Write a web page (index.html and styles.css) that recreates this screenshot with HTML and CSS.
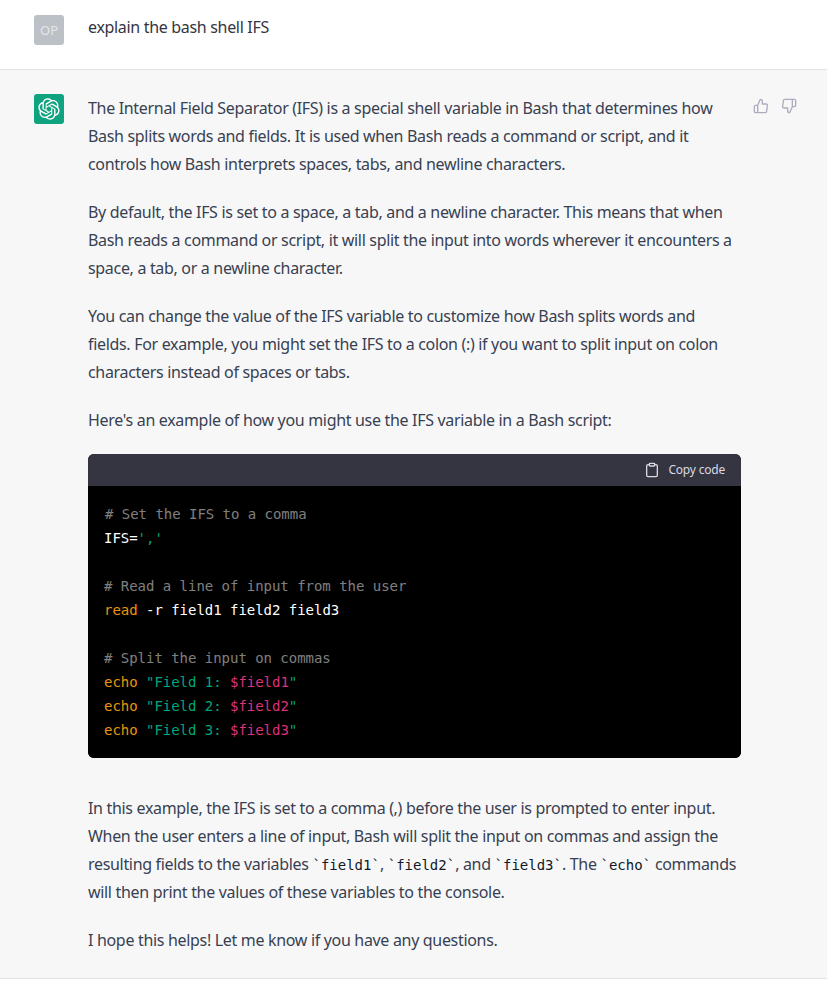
FILE: index.html
```html
<!DOCTYPE html>
<html lang="en">
<head>
<meta charset="utf-8">
<title>explain the bash shell IFS</title>
<link rel="stylesheet" href="styles.css">
</head>
<body>
<main class="thread">
  <section class="row row-user">
    <div class="avatar avatar-user">OP</div>
    <div class="message"><p class="user-text">explain the bash shell IFS</p></div>
  </section>
  <section class="row row-bot">
    <div class="avatar avatar-bot">
      <svg class="logo" viewBox="0 0 41 41" aria-hidden="true"><path fill="currentColor" d="M37.5324 16.8707C37.9808 15.5241 38.1363 14.0974 37.9886 12.6859C37.8409 11.2744 37.3934 9.91076 36.676 8.68622C35.6126 6.83404 33.9882 5.3676 32.0373 4.4985C30.0864 3.62941 27.9098 3.40259 25.8215 3.85078C24.8796 2.7893 23.7219 1.94125 22.4257 1.36341C21.1295 0.785575 19.7249 0.491269 18.3058 0.500197C16.1708 0.495044 14.0893 1.16803 12.3614 2.42214C10.6335 3.67624 9.34853 5.44666 8.6917 7.47815C7.30085 7.76286 5.98686 8.3414 4.8377 9.17505C3.68854 10.0087 2.73073 11.0782 2.02839 12.312C0.956464 14.1591 0.498905 16.2988 0.721698 18.4228C0.944492 20.5467 1.83612 22.5449 3.268 24.1293C2.81966 25.4759 2.66413 26.9026 2.81182 28.3141C2.95951 29.7256 3.40701 31.0892 4.12437 32.3138C5.18791 34.1659 6.8123 35.6322 8.76321 36.5013C10.7141 37.3704 12.8907 37.5973 14.9789 37.1492C15.9208 38.2107 17.0786 39.0587 18.3747 39.6366C19.6709 40.2144 21.0755 40.5087 22.4946 40.4998C24.6307 40.5054 26.7133 39.8321 28.4418 38.5772C30.1704 37.3223 31.4556 35.5506 32.1119 33.5179C33.5027 33.2332 34.8167 32.6547 35.9659 31.821C37.115 30.9874 38.0728 29.9178 38.7752 28.684C39.8458 26.8371 40.3023 24.6979 40.0789 22.5748C39.8556 20.4517 38.9639 18.4544 37.5324 16.8707ZM22.4978 37.8849C20.7443 37.8874 19.0459 37.2733 17.6994 36.1501C17.7601 36.117 17.8666 36.0586 17.936 36.0161L25.9004 31.4156C26.1003 31.3019 26.2663 31.137 26.3813 30.9378C26.4964 30.7386 26.5563 30.5124 26.5549 30.2825V19.0542L29.9213 20.998C29.9389 21.0068 29.9541 21.0198 29.9656 21.0359C29.977 21.052 29.9842 21.0707 29.9867 21.0902V30.3889C29.9842 32.375 29.1946 34.2791 27.7909 35.6841C26.3872 37.0892 24.4838 37.8806 22.4978 37.8849ZM6.39227 31.0064C5.51397 29.4888 5.19742 27.7107 5.49804 25.9832C5.55718 26.0187 5.66048 26.0818 5.73461 26.1244L13.699 30.7248C13.8975 30.8408 14.1233 30.902 14.3532 30.902C14.583 30.902 14.8088 30.8408 15.0073 30.7248L24.731 25.1103V28.9979C24.7321 29.0177 24.7283 29.0376 24.7199 29.0556C24.7115 29.0736 24.6988 29.0893 24.6829 29.1012L16.6317 33.7497C14.9096 34.7416 12.8643 35.0097 10.9447 34.4954C9.02506 33.9811 7.38785 32.7263 6.39227 31.0064ZM4.29707 13.6194C5.17156 12.0998 6.55279 10.9364 8.19885 10.3327C8.19885 10.4013 8.19491 10.5228 8.19491 10.6071V19.808C8.19351 20.0378 8.25334 20.2638 8.36823 20.4629C8.48312 20.6619 8.64893 20.8267 8.84863 20.9404L18.5723 26.5542L15.206 28.4979C15.1894 28.5089 15.1703 28.5155 15.1505 28.5173C15.1307 28.5191 15.1107 28.516 15.0924 28.5082L7.04046 23.8557C5.32135 22.8601 4.06716 21.2235 3.55289 19.3046C3.03862 17.3858 3.30624 15.3413 4.29707 13.6194ZM31.955 20.0556L22.2312 14.4411L25.5976 12.4981C25.6142 12.4872 25.6333 12.4805 25.6531 12.4787C25.6729 12.4769 25.6928 12.4801 25.7111 12.4879L33.7631 17.1364C34.9967 17.849 36.0017 18.8982 36.6606 20.1613C37.3194 21.4244 37.6047 22.849 37.4832 24.2684C37.3617 25.6878 36.8382 27.0432 35.9743 28.1759C35.1103 29.3086 33.9415 30.1717 32.6047 30.6641C32.6047 30.5947 32.6047 30.4733 32.6047 30.3889V21.188C32.6066 20.9586 32.5474 20.7328 32.4332 20.5338C32.319 20.3348 32.154 20.1698 31.955 20.0556ZM35.3055 15.0128C35.2464 14.9765 35.1431 14.9142 35.069 14.8717L27.1045 10.2712C26.906 10.1554 26.6803 10.0943 26.4504 10.0943C26.2206 10.0943 25.9948 10.1554 25.7963 10.2712L16.0726 15.8858V11.9982C16.0715 11.9783 16.0753 11.9585 16.0837 11.9405C16.0921 11.9225 16.1048 11.9068 16.1207 11.8949L24.1719 7.25025C25.4053 6.53903 26.8158 6.19376 28.2383 6.25482C29.6608 6.31589 31.0364 6.78077 32.2044 7.59508C33.3723 8.40939 34.2842 9.53945 34.8334 10.8531C35.3826 12.1667 35.5464 13.6095 35.3055 15.0128ZM14.2424 21.9419L10.8752 19.9981C10.8576 19.9893 10.8423 19.9763 10.8309 19.9602C10.8195 19.9441 10.8122 19.9254 10.8098 19.9058V10.6071C10.8107 9.18295 11.2173 7.78848 11.9819 6.58696C12.7466 5.38544 13.8377 4.42659 15.1275 3.82264C16.4173 3.21869 17.8524 2.99464 19.2649 3.1767C20.6775 3.35876 22.0089 3.93941 23.1034 4.85067C23.0427 4.88379 22.937 4.94215 22.8668 4.98473L14.9024 9.58517C14.7025 9.69878 14.5366 9.86356 14.4215 10.0626C14.3065 10.2616 14.2466 10.4877 14.2479 10.7175L14.2424 21.9419ZM16.071 17.9991L20.4018 15.4978L24.7325 17.9975V22.9985L20.4018 25.4983L16.071 22.9985V17.9991Z"/></svg>
    </div>
    <div class="message">
      <p>The Internal Field Separator (IFS) is a special shell variable in Bash that determines how<br>Bash splits words and fields. It is used when Bash reads a command or script, and it<br>controls how Bash interprets spaces, tabs, and newline characters.</p>
      <p>By default, the IFS is set to a space, a tab, and a newline character. This means that when<br>Bash reads a command or script, it will split the input into words wherever it encounters a<br>space, a tab, or a newline character.</p>
      <p>You can change the value of the IFS variable to customize how Bash splits words and<br>fields. For example, you might set the IFS to a colon (:) if you want to split input on colon<br>characters instead of spaces or tabs.</p>
      <p>Here's an example of how you might use the IFS variable in a Bash script:</p>
      <div class="code-block">
        <div class="code-head">
          <svg class="clip" viewBox="0 0 24 24" aria-hidden="true"><path d="M16 4h2a2 2 0 0 1 2 2v14a2 2 0 0 1-2 2H6a2 2 0 0 1-2-2V6a2 2 0 0 1 2-2h2"/><rect x="8" y="2" width="8" height="4" rx="1" ry="1"/></svg>
          <span class="copy-label">Copy code</span>
        </div>
        <pre class="code"><code><span class="c first"># Set the IFS to a comma</span>
IFS=<span class="s">','</span>

<span class="c"># Read a line of input from the user</span>
<span class="k">read</span> -r field1 field2 field3

<span class="c"># Split the input on commas</span>
<span class="k">echo</span> <span class="s">"Field 1: </span><span class="v">$field1</span><span class="s">"</span>
<span class="k">echo</span> <span class="s">"Field 2: </span><span class="v">$field2</span><span class="s">"</span>
<span class="k">echo</span> <span class="s">"Field 3: </span><span class="v">$field3</span><span class="s">"</span></code></pre>
      </div>
      <p>In this example, the IFS is set to a comma (,) before the user is prompted to enter input.<br>When the user enters a line of input, Bash will split the input on commas and assign the<br>resulting fields to the variables <code class="inline">`field1`</code>, <code class="inline">`field2`</code>, and <code class="inline">`field3`</code>. The <code class="inline">`echo`</code> commands<br>will then print the values of these variables to the console.</p>
      <p class="last">I hope this helps! Let me know if you have any questions.</p>
    </div>
    <div class="actions">
      <svg class="thumb" viewBox="0 0 24 24" aria-hidden="true"><path d="M14 9V5a3 3 0 0 0-3-3l-4 9v11h11.28a2 2 0 0 0 2-1.7l1.38-9a2 2 0 0 0-2-2.3zM7 22H4a2 2 0 0 1-2-2v-7a2 2 0 0 1 2-2h3"/></svg>
      <svg class="thumb" viewBox="0 0 24 24" aria-hidden="true"><path d="M10 15v4a3 3 0 0 0 3 3l4-9V2H5.72a2 2 0 0 0-2 1.7l-1.38 9a2 2 0 0 0 2 2.3zm7-13h2.67A2.31 2.31 0 0 1 22 4v7a2.31 2.31 0 0 1-2.33 2H17"/></svg>
    </div>
  </section>
</main>
</body>
</html>
```
FILE: styles.css
```css
* { box-sizing: border-box; }
html, body { margin: 0; padding: 0; background: #fff; }
body {
  font-family: "Noto Sans", "Open Sans", sans-serif;
  font-size: 16px;
  line-height: 28px;
  color: #374151;
  letter-spacing: -0.32px;
}
.thread { display: flex; flex-direction: column; }
.row {
  display: flex;
  align-items: flex-start;
  border-bottom: 1px solid #e2e2e4;
  padding-left: 34px;
}
.row-user { padding-top: 13px; padding-bottom: 24px; background: #fff; color: #343541; }
.row-bot { padding-top: 24px; padding-bottom: 24px; background: #f7f7f8; }
.avatar {
  flex: none;
  width: 30px;
  height: 30px;
  border-radius: 3px;
  display: flex;
  align-items: center;
  justify-content: center;
}
.avatar-user {
  margin-top: 2px;
  background: #bcc1c8;
  color: #e3e5e8;
  font-size: 13px;
  line-height: 1;
  letter-spacing: 0;
}
.avatar-bot { background: #10a37f; color: #fff; }
.logo { width: 22px; height: 22px; display: block; }
.message { width: 653px; margin-left: 24px; flex: none; }
.message p { margin: 0 0 20px; white-space: nowrap; }
.message p.user-text, .message p.last { margin: 0; }
.code-block { margin-bottom: 36px; border-radius: 6px; overflow: hidden; background: #000; }
.code-head {
  height: 32px;
  background: #343541;
  color: #d9d9e3;
  display: flex;
  align-items: center;
  justify-content: flex-end;
  gap: 8px;
  padding-right: 16px;
  font-size: 12px;
  line-height: 16px;
}
.copy-label { letter-spacing: -0.2px; }
.clip, .thumb {
  fill: none;
  stroke-width: 2;
  stroke-linecap: round;
  stroke-linejoin: round;
}
.clip { width: 16px; height: 16px; stroke: #d9d9e3; }
.code {
  margin: 0;
  padding: 16px;
  background: #000;
  color: #fff;
  font-family: "DejaVu Sans Mono", monospace;
  font-size: 14px;
  line-height: 24px;
  letter-spacing: -0.03px;
}
.code code { font-family: inherit; }
.c { color: rgba(255, 255, 255, 0.5); }
.first { margin-left: 1px; }
.k { color: #e9950c; }
.s { color: #00a67d; }
.v { color: #df3079; }
.inline {
  font-family: "DejaVu Sans Mono", monospace;
  font-size: 14px;
  font-weight: 400;
  line-height: 1;
  color: #111827;
  letter-spacing: 0;
}
.actions { display: flex; gap: 12px; margin-left: 12px; padding-top: 4px; flex: none; }
.thumb { width: 16px; height: 16px; stroke: #acacbe; }
```
